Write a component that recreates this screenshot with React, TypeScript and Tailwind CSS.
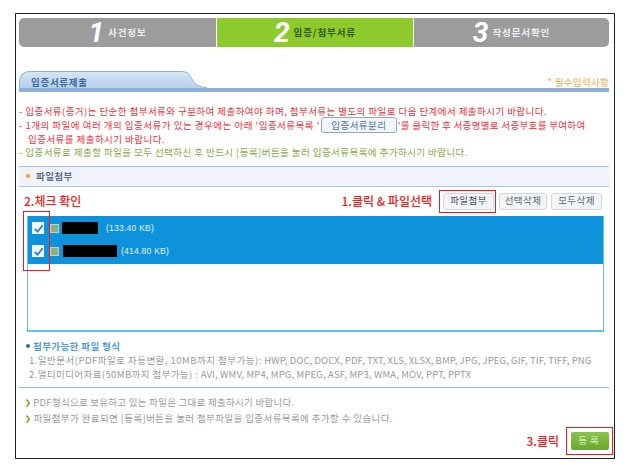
function Step({ num, label, active, className }: { num: string; label: string; active?: boolean; className: string }) {
  return (
    <div className={`flex items-center justify-center gap-[3px] text-white ${active ? 'bg-[#8fca2d]' : 'bg-[#9c9c9c]'} ${className}`}>
      <span className="[font-family:Roboto,sans-serif] italic font-bold text-[28px] leading-[29px] pr-[1px]">{num}</span>
      <span className={`font-bold text-[9.5px] tracking-[0.9px] ${active ? 'text-[#2f5a10]' : 'text-[#eeeeee]'}`}>{label}</span>
    </div>
  );
}

function GrayButton({ label, strong, className }: { label: string; strong?: boolean; className: string }) {
  return (
    <button className={`h-[17px] rounded-[3px] border border-[#d4d8dc] bg-[#f3f4f6] text-[9.5px] leading-none tracking-[0.4px] ${strong ? 'text-[#44505e]' : 'text-[#5a6a7c]'} ${className}`}>
      {label}
    </button>
  );
}

function FileRow({ name, size, sizeGap }: { name: string; size: string; sizeGap: string }) {
  return (
    <div className="flex items-center h-[23px] pl-[4px]">
      <span className="flex items-center justify-center w-[12px] h-[12px] bg-[#f4f8fc]">
        <svg width="11" height="11" viewBox="0 0 12 12" fill="none">
          <path d="M2 6.5 L5 9.5 L10.5 2.5" stroke="#1b86d8" strokeWidth="2" />
        </svg>
      </span>
      <span className="w-[9px] h-[9px] ml-[6px] bg-[#8fae7c] border border-[#c8ccc4]" />
      <span className={`h-[12px] bg-black ${name}`} />
      <span className={`text-[8.5px] [font-family:'Liberation_Sans',sans-serif] tracking-[0.25px] text-[#e4f2fb] ${sizeGap}`}>{size}</span>
    </div>
  );
}

export default function App() {
  return (
    <div className="relative w-[633px] h-[464px] bg-white pl-[15px] pt-[13px] [font-family:'Noto_Sans_CJK_KR','Liberation_Sans',sans-serif]">
      <div className="w-[600px] h-[446px] border-[1.5px] border-[#222222] pl-[3px] pr-[5px] pt-[3.5px]">
        {/* Steps */}
        <div className="flex h-[29px]">
          <Step num="1" label="사건정보" className="w-[197px] mr-[1px] rounded-l-[5px]" />
          <Step num="2" label="입증/첨부서류" active className="w-[196px] mr-[1px]" />
          <Step num="3" label="작성문서확인" className="flex-1 rounded-r-[5px]" />
        </div>

        {/* Tab header */}
        <div className="relative flex items-end h-[21px] mt-[24px] border-b-[4px] border-[#8cb0d8]">
          <div className="flex items-center w-[162px] h-[17px] pl-[11px] pt-[5px] rounded-tl-[10px] bg-gradient-to-b from-[#d6e5f4] to-[#b6d0ea] border-t border-l border-[#8cb0d8] text-[9.5px] font-bold text-[#3a689e] tracking-[0.7px]">
            입증서류제출
          </div>
          <svg width="26" height="17" viewBox="0 0 26 17" className="block">
            <defs>
              <linearGradient id="tabFill" x1="0" y1="0" x2="0" y2="1">
                <stop offset="0" stopColor="#d6e5f4" />
                <stop offset="1" stopColor="#b6d0ea" />
              </linearGradient>
            </defs>
            <path d="M0 0.5 C8 0.5 8 4 11 8 C14 13 18 16.5 26 16.5 L26 17 L0 17 Z" fill="url(#tabFill)" />
            <path d="M0 0.5 C8 0.5 8 4 11 8 C14 13 18 16.5 26 16.5" fill="none" stroke="#8cb0d8" />
          </svg>
          <span className="absolute right-0 top-[4px] text-[9.5px] text-[#f0ab50] tracking-[0.3px]">* 필수입력사항</span>
        </div>

        {/* Notices */}
        <div className="mt-[12px] text-[9.5px] leading-[14px] tracking-[0.44px]">
          <p className="text-[#f0303c]">- 입증서류(증거)는 단순한 첨부서류와 구분하여 제출하여야 하며, 첨부서류는 별도의 파일로 다음 단계에서 제출하시기 바랍니다.</p>
          <p className="flex items-center h-[14px] text-[#f0303c]">
            <span className="tracking-[0.5px]">- 1개의 파일에 여러 개의 입증서류가 있는 경우에는 아래 '입증서류목록 '</span>
            <span className="inline-flex items-center justify-center w-[76px] h-[16px] mx-[1px] rounded-[3px] border border-[#90a8c4] bg-[#f2f5f9] text-[#4c74a0]">입증서류분리</span>
            <span className="tracking-[0.33px]">'를 클릭한 후 서증명별로 서증부호를 부여하여</span>
          </p>
          <p className="pl-[9px] text-[#f0303c] tracking-[0.45px]">입증서류를 제출하시기 바랍니다.</p>
          <p className="-mt-[1px] text-[#86a84a]">- 입증서류로 제출할 파일을 모두 선택하신 후 반드시 [등록]버튼을 눌러 입증서류목록에 추가하시기 바랍니다.</p>
        </div>

        {/* File section */}
        <div className="flex items-center h-[21px] mt-[7px] pl-[7px] gap-[6px] bg-[#f0f3fb] border-y border-[#a9c4ea] text-[9.5px] font-bold text-[#5a6c88] tracking-[0.4px]">
          <span className="w-[4px] h-[4px] rounded-full bg-[#f0a030]" />
          파일첨부
        </div>

        <div className="flex items-center justify-between h-[29px] pr-[7px] pl-[5px]">
          <span className="text-[12px] font-medium text-[#f02020] leading-none">2.체크 확인</span>
          <div className="flex items-center">
            <span className="text-[12px] font-medium text-[#f02020] leading-none mr-[11px]">1.클릭 &amp; 파일선택</span>
            <GrayButton label="파일첨부" strong className="w-[51px] mr-[5px]" />
            <GrayButton label="선택삭제" className="w-[48px] mr-[4px]" />
            <GrayButton label="모두삭제" className="w-[51px]" />
          </div>
        </div>

        {/* File list */}
        <div className="ml-[8px] mr-[5px] h-[116px] border-x border-b-[2px] border-[#62c0f2]">
          <div className="h-[48px] bg-[#0f92dc] pt-[1px]">
            <FileRow name="w-[36px] ml-[3px]" size="(133.40 KB)" sizeGap="ml-[8px]" />
            <FileRow name="w-[54px] ml-[4px]" size="(414.80 KB)" sizeGap="ml-[4px]" />
          </div>
        </div>

        {/* Allowed formats */}
        <div className="mt-[7px] pl-[7px] pb-[6px] border-b border-[#8cb8ec] text-[9.5px] leading-[14px] text-[#9a9a9a]">
          <p className="flex items-center gap-[3px] font-bold text-[#4a9ce0] tracking-[0.4px]">
            <span className="w-[4px] h-[4px] rounded-full bg-[#2a6cb8]" />
            첨부가능한 파일 형식
          </p>
          <p className="pl-[3px] tracking-[0.48px]">1.일반문서(PDF파일로 자동변환, 10MB까지 첨부가능): <span className="tracking-[0.09px]">HWP, DOC, DOCX, PDF, TXT, XLS, XLSX, BMP, JPG, JPEG, GIF, TIF, TIFF, PNG</span></p>
          <p className="pl-[3px] tracking-[0.41px]">2.멀티미디어자료(50MB까지 첨부가능) : <span className="tracking-[0.14px]">AVI, WMV, MP4, MPG, MPEG, ASF, MP3, WMA, MOV, PPT, PPTX</span></p>
        </div>

        <div className="mt-[6px] pl-[6px] text-[9.5px] leading-[16px] text-[#9a9a9a]">
          <p className="flex items-center gap-[2px] tracking-[0.27px]"><span className="text-[#7aa82c] text-[7px] font-bold">❯</span>PDF형식으로 보유하고 있는 파일은 그대로 제출하시기 바랍니다.</p>
          <p className="flex items-center gap-[2px] tracking-[0.4px]"><span className="text-[#7aa82c] text-[7px] font-bold">❯</span>파일첨부가 완료되면 [등록]버튼을 눌러 첨부파일을 입증서류목록에 추가할 수 있습니다.</p>
        </div>

        <div className="flex items-center justify-end mt-[6px]">
          <span className="text-[12px] font-medium text-[#f02020] leading-none mr-[12px]">3.클릭</span>
          <button className="w-[38px] h-[18px] rounded-[2px] bg-gradient-to-b from-[#8cc24a] to-[#68a82c] text-[9.5px] text-[#dcefc4] tracking-[3px]">등록</button>
        </div>
      </div>

      {/* Annotation boxes */}
      <div className="absolute left-[23px] top-[211px] w-[27px] h-[60px] border-[1.5px] border-[#f01818]" />
      <div className="absolute left-[439px] top-[190px] w-[57px] h-[23px] border-[1.5px] border-[#f01818]" />
      <div className="absolute left-[566px] top-[427px] w-[47px] h-[28px] border-[1.5px] border-[#f01818]" />
    </div>
  );
}
